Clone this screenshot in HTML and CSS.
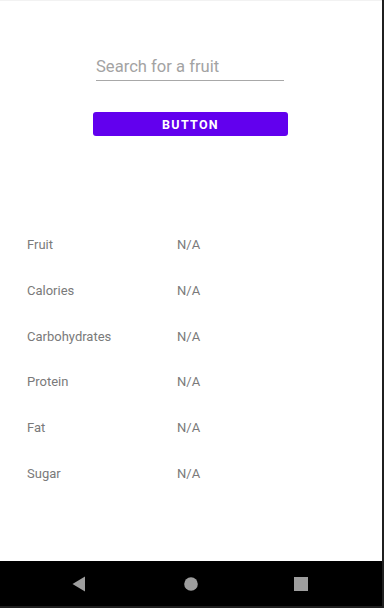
FILE: index.html
```html
<!DOCTYPE html>
<html>
<head>
<meta charset="utf-8">
<link rel="stylesheet" href="styles.css">
</head>
<body>
<div class="device">
  <div class="screen">
    <div class="app">
      <div class="top">
        <div class="search"><span class="hint">Search for a fruit</span></div>
        <div class="button">BUTTON</div>
      </div>
      <div class="rows">
        <div class="row"><span class="label">Fruit</span><span class="value">N/A</span></div>
        <div class="row"><span class="label">Calories</span><span class="value">N/A</span></div>
        <div class="row"><span class="label">Carbohydrates</span><span class="value">N/A</span></div>
        <div class="row"><span class="label">Protein</span><span class="value">N/A</span></div>
        <div class="row"><span class="label">Fat</span><span class="value">N/A</span></div>
        <div class="row"><span class="label">Sugar</span><span class="value">N/A</span></div>
      </div>
    </div>
    <div class="navbar">
      <svg class="nav-icon" width="14" height="16" viewBox="0 0 14 16"><polygon points="13,0.5 13,15.5 0.5,8" fill="#9e9e9e"/></svg>
      <svg class="nav-icon" width="14" height="14" viewBox="0 0 14 14"><circle cx="7" cy="7" r="6.8" fill="#9e9e9e"/></svg>
      <svg class="nav-icon" width="14" height="14" viewBox="0 0 14 14"><rect x="0" y="0" width="14" height="14" fill="#9e9e9e"/></svg>
    </div>
  </div>
</div>
</body>
</html>
```
FILE: styles.css
```css
html, body {
  margin: 0;
  padding: 0;
  background: #1f1f1f;
}
.device {
  width: 384px;
  height: 608px;
  background: #1f1f1f;
  display: flex;
}
.screen {
  width: 382px;
  height: 606px;
  display: flex;
  flex-direction: column;
  font-family: Roboto, "Noto Sans", sans-serif;
}
.app {
  height: 561px;
  background: #ffffff;
  border-top: 1px solid #f2f2f2;
  box-sizing: border-box;
  display: flex;
  flex-direction: column;
}
.top {
  display: flex;
  flex-direction: column;
  align-items: center;
  padding-top: 54px;
  padding-right: 2px;
}
.search {
  width: 188px;
  height: 25px;
  border-bottom: 1px solid #a8a8a8;
  display: flex;
  align-items: flex-end;
}
.hint {
  font-size: 16.6px;
  color: #a3a3a3;
  line-height: 20px;
  padding-bottom: 3px;
}
.button {
  margin-top: 31px;
  width: 195px;
  height: 24px;
  background: #6200ee;
  border-radius: 3px;
  color: #ffffff;
  font-size: 12.5px;
  font-weight: 700;
  letter-spacing: 1.3px;
  display: flex;
  align-items: center;
  justify-content: center;
  margin-left: 1px;
}
.rows {
  display: flex;
  flex-direction: column;
  padding-top: 101px;
  padding-left: 27px;
}
.row {
  display: flex;
  height: 45.8px;
  align-items: flex-start;
  font-size: 13px;
  color: #7a7a7a;
  line-height: 16px;
}
.label {
  width: 150px;
}
.navbar {
  height: 45px;
  background: #000000;
  display: flex;
  align-items: center;
  justify-content: center;
}
.nav-icon {
  display: block;
}
.nav-icon:nth-child(1) { margin-right: 98px; margin-left: -2px; }
.nav-icon:nth-child(2) { margin-right: 96px; }
```
